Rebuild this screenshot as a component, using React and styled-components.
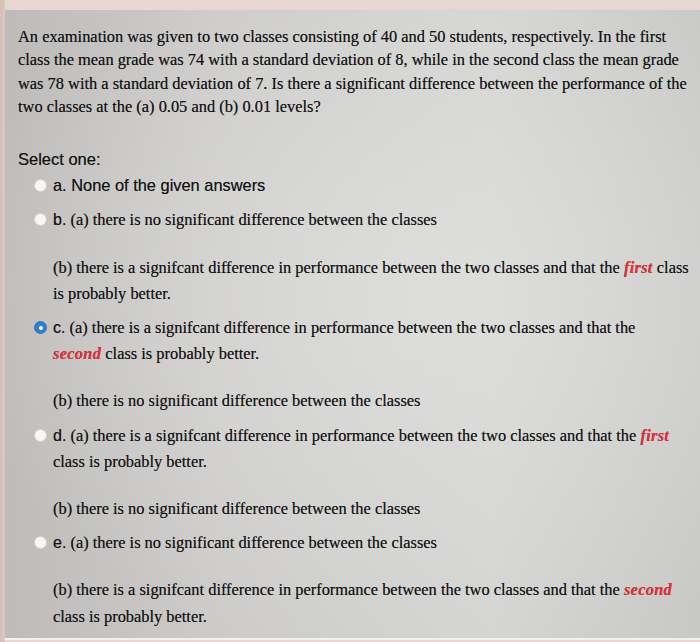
import React from "react"
import styled, { createGlobalStyle } from "styled-components"

const GlobalStyle = createGlobalStyle`
  html, body {
    margin: 0;
    padding: 0;
    background: #e6d2ce;
  }
  #root {
    width: 700px;
    height: 642px;
    overflow: hidden;
  }
`

const Screen = styled.div`
  width: 700px;
  height: 642px;
  box-sizing: border-box;
  padding: 10px 0 2px 5px;
  background: linear-gradient(90deg, #d7bdb8 0, #dcc8c3 5px, #e8d6d2 5px);
  display: flex;
`

const Panel = styled.div`
  flex: 1;
  box-sizing: border-box;
  padding: 15px 0 0 13px;
  overflow: hidden;
  background:
    radial-gradient(ellipse 70% 60% at 62% 45%, rgba(226, 226, 224, 0.7), rgba(226, 226, 224, 0) 100%),
    linear-gradient(90deg, #bdbcba 0%, #cccbc9 30%, #d4d4d2 70%, #c8c8c6 100%);
  border-bottom: 2px solid #f1f1f0;
  color: #141414;
  text-shadow: 0 0 0.5px rgba(20, 20, 20, 0.6);
`

const Question = styled.p`
  margin: 0;
  font-family: "Liberation Serif", "Times New Roman", serif;
  font-size: 16.4px;
  line-height: 23.3px;
  white-space: nowrap;
`

const Prompt = styled.div`
  margin-top: 31px;
  font-family: "Liberation Sans", Arial, sans-serif;
  font-size: 16.5px;
  line-height: 20px;
`

const Options = styled.div`
  margin-top: 4px;
  padding-left: 16px;
  display: flex;
  flex-direction: column;
  gap: 8px;
`

const Row = styled.div`
  display: flex;
  align-items: flex-start;
  gap: 6px;
`

const Radio = styled.span`
  flex: none;
  width: 13px;
  height: 13px;
  margin-top: 6px;
  border-radius: 50%;
  box-sizing: border-box;
  background: ${(p) => (p.$checked ? "#2f7fcf" : "#fbf5f3")};
  border: 1px solid ${(p) => (p.$checked ? "#2a74bf" : "#d9cfcc")};
  display: flex;
  align-items: center;
  justify-content: center;

  &::after {
    content: "";
    display: ${(p) => (p.$checked ? "block" : "none")};
    width: 4px;
    height: 4px;
    border-radius: 50%;
    background: #ffffff;
  }
`

const Body = styled.div`
  font-family: "Liberation Serif", "Times New Roman", serif;
  font-size: 16.4px;
  line-height: 26.2px;
  white-space: nowrap;
`

const Part = styled.p`
  margin: 0;
  & + & {
    margin-top: 21px;
  }
`

const Letter = styled.span`
  font-family: "Liberation Sans", Arial, sans-serif;
  font-size: 16px;
  line-height: 1;
`

const Plain = styled.span`
  font-family: "Liberation Sans", Arial, sans-serif;
  font-size: 16.4px;
  line-height: 1;
`

const Accent = styled.em`
  color: #e42f3d;
  font-weight: bold;
  letter-spacing: 0.3px;
`

const options = [
  {
    key: "a",
    parts: [<Plain>a. None of the given answers</Plain>],
  },
  {
    key: "b",
    parts: [
      <>
        <Letter>b.</Letter> (a) there is no significant difference between the classes
      </>,
      <>
        (b) there is a signifcant difference in performance between the two classes and that the{" "}
        <Accent>first</Accent> class
        <br />
        is probably better.
      </>,
    ],
  },
  {
    key: "c",
    checked: true,
    parts: [
      <>
        <Letter>c.</Letter> (a) there is a signifcant difference in performance between the two
        classes and that the
        <br />
        <Accent>second</Accent> class is probably better.
      </>,
      <>(b) there is no significant difference between the classes</>,
    ],
  },
  {
    key: "d",
    parts: [
      <>
        <Letter>d.</Letter> (a) there is a signifcant difference in performance between the two
        classes and that the <Accent>first</Accent>
        <br />
        class is probably better.
      </>,
      <>(b) there is no significant difference between the classes</>,
    ],
  },
  {
    key: "e",
    parts: [
      <>
        <Letter>e.</Letter> (a) there is no significant difference between the classes
      </>,
      <>
        (b) there is a signifcant difference in performance between the two classes and that the{" "}
        <Accent>second</Accent>
        <br />
        class is probably better.
      </>,
    ],
  },
]

export default function App() {
  return (
    <>
      <GlobalStyle />
      <Screen>
        <Panel>
          <Question>
            An examination was given to two classes consisting of 40 and 50 students, respectively.
            In the first
            <br />
            class the mean grade was 74 with a standard deviation of 8, while in the second class
            the mean grade
            <br />
            was 78 with a standard deviation of 7. Is there a significant difference between the
            performance of the
            <br />
            two classes at the (a) 0.05 and (b) 0.01 levels?
          </Question>
          <Prompt>Select one:</Prompt>
          <Options>
            {options.map((o) => (
              <Row key={o.key}>
                <Radio $checked={o.checked} />
                <Body>
                  {o.parts.map((part, i) => (
                    <Part key={i}>{part}</Part>
                  ))}
                </Body>
              </Row>
            ))}
          </Options>
        </Panel>
      </Screen>
    </>
  )
}
